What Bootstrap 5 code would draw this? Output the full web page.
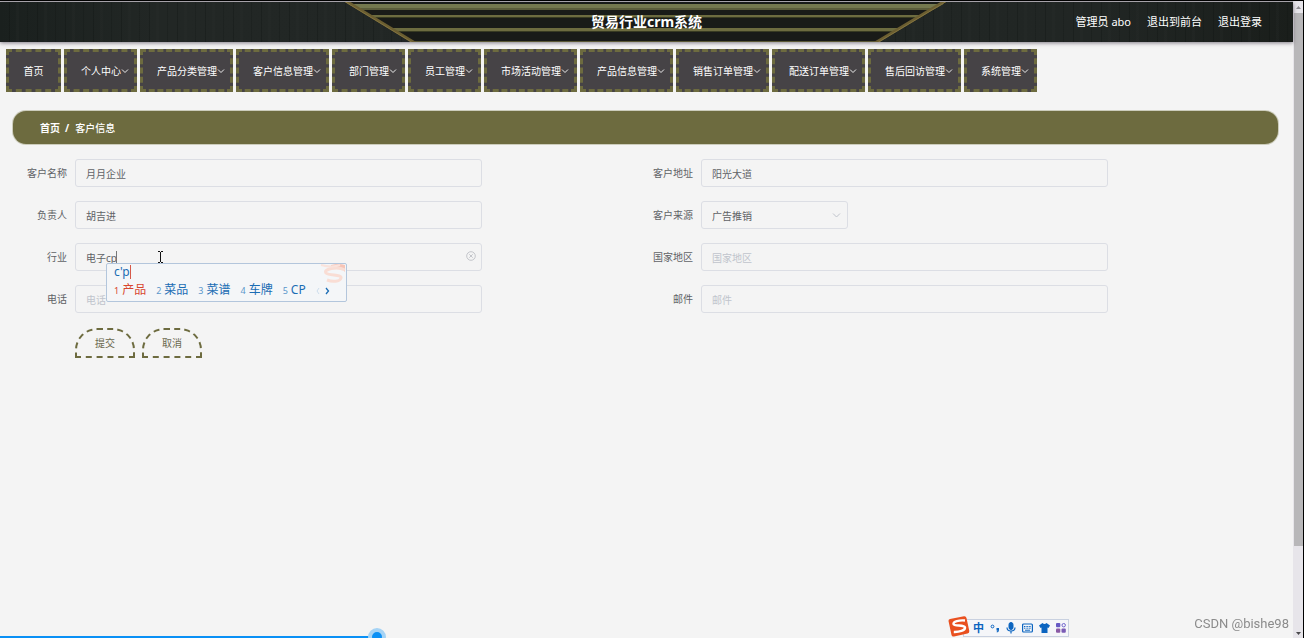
<!DOCTYPE html>
<html lang="zh-CN">
<head>
<meta charset="utf-8">
<meta name="viewport" content="width=device-width, initial-scale=1">
<title>贸易行业crm系统</title>
<link href="https://cdn.jsdelivr.net/npm/bootstrap@5.3.0/dist/css/bootstrap.min.css" rel="stylesheet">
<style>
:root { --olive: #6d6b3f; --line: #dcdee4; }
body { font-family: "Noto Sans", "Noto Sans CJK SC", sans-serif; font-size: 10px; line-height: 16px; color: #606266; background: #f4f4f4; border-top: 1px solid #000; }
.page-main { min-width: 0; border-top: 1px solid #b5b3b8; }
.top-bar { height: 40px; background: repeating-linear-gradient(90deg, #0000 0 9px, #0a0f0d44 9px 10px, #0000 10px 16px, #2c302e33 16px 19px, #0000 19px 27px, #0a0f0d33 27px 28px), linear-gradient(90deg, #1a201e, #222725 12%, #212624 85%, #1a1e1b); box-shadow: 0 1px 4px #645c6acc; display: grid; grid-template-columns: 1fr auto 1fr; }
.top-bar h1 { font-size: 14px; line-height: 20px; font-weight: 700; }
.top-links { font-size: 11px; gap: 16px; padding-right: 31px; }
.main-menu { gap: 3px; padding: 7px 6px 0; }
.menu-btn { background: #464346; border: 3px dashed var(--olive); border-radius: 0; color: #fff; font-size: 10px; line-height: 16px; height: 43px; min-width: 55px; padding: 0 14px; white-space: nowrap; }
.menu-btn.has-sub { padding-right: 5px; }
.menu-btn:hover { background: #353235; color: #fff; border-color: var(--olive); }
.crumbs { margin: 19px 15px 15px 13px; height: 33px; padding: 0 27px; border-radius: 13px; background: var(--olive); box-shadow: 0 0 0 1px #a9a88988; font-weight: 500; color: #fff; }
.crumbs .breadcrumb-item { padding: 0; }
.crumbs .breadcrumb-item + .breadcrumb-item::before { color: #fff; padding: 0 6px 0 5px; font-weight: 700; }
.edit-form { padding: 0 28px 0 13px; display: grid; grid-template-columns: 1fr 1fr; row-gap: 14px; }
.field label { width: 54px; margin-right: 8px; text-align: right; flex: none; }
.field-box { width: 65%; }
.field .form-control, .field .form-select { height: 28px; font-size: 10px; line-height: 16px; color: #606266; background-color: transparent; border: 1px solid var(--line); border-radius: 3px; padding: 1px 10px 0; }
.field .form-select { width: 147px; background-image: none; }
.field .form-control::placeholder { color: #c0c4cc; }
.select-arrow { left: 131px; top: 11px; pointer-events: none; }
.clear-icon { right: 6px; top: 8px; }
.text-caret { left: 41px; top: 8px; width: 1px; height: 12px; background: #777; }
.ibeam { left: 82px; top: 8px; }
.ime { left: 31px; top: 20px; width: 241px; height: 39px; background: #f4f6f8; border: 1px solid #b3c6dc; border-radius: 2px; padding: 1px 7px 0; color: #1b6db4; font-size: 12px; line-height: 16px; z-index: 2; overflow: hidden; }
.ime-typed { width: max-content; border-right: 1px solid #d65a4a; line-height: 14px; }
.ime-list { margin-top: 3px; gap: 10px; white-space: nowrap; }
.ime-list small { font-size: 9px; color: #5b96cb; margin-right: 3px; }
.ime-list .picked, .ime-list .picked small { color: #d9472f; }
.ime-logo { right: 0; top: 0; }
.form-actions { padding: 15px 0 0 75px; gap: 7px; }
.arch-btn { width: 60px; height: 30px; font-size: 10px; line-height: 16px; padding: 0; color: #6b6950; border: 2px dashed var(--olive); border-radius: 22px 22px 0 0; }
.arch-btn:hover { background: #e7e7dc; border-color: var(--olive); color: #6b6950; }
.page-scroll { width: 11px; flex: none; background: #e7e5ea; border-right: 1px solid #000; }
.page-scroll .track-cap { height: 12px; }
.page-scroll .thumb { flex: 86 1 0; background: #b8b7b9; margin: 0 0 0 1px; }
.page-scroll .track-rest { flex: 13 1 0; }
.video-line { left: 0; bottom: 0; width: 29%; height: 2px; background: #0a90f5; }
.video-knob { right: -8px; bottom: -8px; width: 18px; height: 18px; border-radius: 50%; background: #0a90f5; border: 4px solid #a5d3f5; }
.ime-bar { right: 235px; bottom: 1px; height: 20px; width: 121px; }
.ime-bar-body { margin-left: 15px; margin-top: 2px; height: 18px; border: 1px solid #c9d1e0; gap: 6px; padding-left: 9px; color: #0b64c0; background: #f5f6f9; font-size: 11px; font-weight: 700; }
.stamp { right: 15px; bottom: 5px; font-size: 13px; line-height: 18px; color: #8b8b8b; font-family: Roboto, sans-serif; }
</style>
</head>
<body>
<div class="d-flex min-vh-100">
  <div class="page-main flex-grow-1">
    <header class="top-bar position-relative align-items-center">
      <svg class="position-absolute top-0 start-0 w-100 h-100" viewBox="0 0 1293 40" preserveAspectRatio="none" aria-hidden="true">
        <defs><clipPath id="panel"><path d="M345 0H947L877 40H414Z"/></clipPath></defs>
        <g clip-path="url(#panel)">
          <path fill="#191b18" d="M340 0H950V40H340Z"/>
          <path fill="#74784e" d="M340 2H950V6H340Z"/><path fill="#5b5c3a" d="M340 6H950V8H340Z"/>
          <path fill="#6d6c40" d="M340 13H950V15H340ZM340 26H950V29H340Z"/>
          <path fill="#383b22" d="M340 15H950V16H340ZM340 29H950V30H340Z"/>
          <path fill="#5a5935" d="M340 39H950V40H340Z"/>
        </g>
        <path d="M346-1L415 41M945-1L875 41" stroke="#6b5e31" stroke-width="3" fill="none"/>
        <path d="M344-1L413 41M947-1L877 41" stroke="#82733f" stroke-width="1" fill="none"/>
      </svg>
      <span></span>
      <h1 class="position-relative text-white m-0">贸易行业crm系统</h1>
      <nav class="top-links position-relative d-flex justify-content-end">
        <span class="text-white">管理员 abo</span>
        <a class="text-white text-decoration-none" href="#">退出到前台</a>
        <a class="text-white text-decoration-none" href="#">退出登录</a>
      </nav>
    </header>

    <svg class="d-none" aria-hidden="true"><symbol id="chev" viewBox="0 0 8 8"><path d="M1 2.5L4 5.5L7 2.5" fill="none" stroke="currentColor" stroke-width=".9"/></symbol></svg>
    <nav class="main-menu d-flex flex-wrap">
      <button class="btn menu-btn" type="button">首页</button>
      <button class="btn menu-btn has-sub d-flex align-items-center" type="button">个人中心<svg width="8" height="8"><use href="#chev"/></svg></button>
      <button class="btn menu-btn has-sub d-flex align-items-center" type="button">产品分类管理<svg width="8" height="8"><use href="#chev"/></svg></button>
      <button class="btn menu-btn has-sub d-flex align-items-center" type="button">客户信息管理<svg width="8" height="8"><use href="#chev"/></svg></button>
      <button class="btn menu-btn has-sub d-flex align-items-center" type="button">部门管理<svg width="8" height="8"><use href="#chev"/></svg></button>
      <button class="btn menu-btn has-sub d-flex align-items-center" type="button">员工管理<svg width="8" height="8"><use href="#chev"/></svg></button>
      <button class="btn menu-btn has-sub d-flex align-items-center" type="button">市场活动管理<svg width="8" height="8"><use href="#chev"/></svg></button>
      <button class="btn menu-btn has-sub d-flex align-items-center" type="button">产品信息管理<svg width="8" height="8"><use href="#chev"/></svg></button>
      <button class="btn menu-btn has-sub d-flex align-items-center" type="button">销售订单管理<svg width="8" height="8"><use href="#chev"/></svg></button>
      <button class="btn menu-btn has-sub d-flex align-items-center" type="button">配送订单管理<svg width="8" height="8"><use href="#chev"/></svg></button>
      <button class="btn menu-btn has-sub d-flex align-items-center" type="button">售后回访管理<svg width="8" height="8"><use href="#chev"/></svg></button>
      <button class="btn menu-btn has-sub d-flex align-items-center" type="button">系统管理<svg width="8" height="8"><use href="#chev"/></svg></button>
    </nav>

    <nav class="crumbs d-flex align-items-center" aria-label="breadcrumb">
      <ol class="breadcrumb m-0">
        <li class="breadcrumb-item"><a class="text-white text-decoration-none fw-bold" href="#">首页</a></li>
        <li class="breadcrumb-item text-white" aria-current="page">客户信息</li>
      </ol>
    </nav>

    <form>
      <div class="edit-form">
        <div class="field d-flex align-items-center"><label for="f-name">客户名称</label><div class="field-box"><input class="form-control" id="f-name" value="月月企业"></div></div>
        <div class="field d-flex align-items-center"><label for="f-addr">客户地址</label><div class="field-box"><input class="form-control" id="f-addr" value="阳光大道"></div></div>
        <div class="field d-flex align-items-center"><label for="f-owner">负责人</label><div class="field-box"><input class="form-control" id="f-owner" value="胡吉进"></div></div>
        <div class="field d-flex align-items-center"><label for="f-src">客户来源</label><div class="field-box position-relative"><select class="form-select" id="f-src"><option>广告推销</option></select>
          <svg class="select-arrow position-absolute" width="9" height="7" viewBox="0 0 9 7"><path d="M1 1.5L4.500 5L8 1.500" fill="none" stroke="#c0c4cc"/></svg></div></div>
        <div class="field d-flex align-items-center"><label for="f-trade">行业</label>
          <div class="field-box position-relative">
            <input class="form-control" id="f-trade" value="电子cp">
            <span class="text-caret position-absolute"></span>
            <svg class="clear-icon position-absolute" width="10" height="10" viewBox="0 0 10 10" fill="none" stroke="#c3c5ca"><circle cx="5" cy="5" r="4.300"/><path d="M3.300 3.300L6.700 6.700M6.700 3.300L3.300 6.700"/></svg>
            <svg class="ibeam position-absolute" width="7" height="12" viewBox="0 0 7 12" fill="none" stroke="#111"><path d="M1 .5H3M4 .5H6M3.500 1V11M1 11.500H3M4 11.500H6"/></svg>
            <div class="ime position-absolute">
              <svg class="ime-logo position-absolute" width="26" height="22" viewBox="0 0 26 22" fill="none"><path d="M11 1Q19 -1 25 1V8Q22 3 11 4Z" fill="#f6c4b6"/><path d="M25 6C17 2 3 5 6 9C9 12 22 10 21 14C20 18 12 18 7 16" stroke="#f9ddd4" stroke-width="3"/><path d="M1 1Q12 4 20 1" stroke="#fae3dc" stroke-width="2"/></svg>
              <div class="ime-typed">c'p</div>
              <div class="ime-list d-flex">
                <span class="picked"><small>1</small>产品</span><span><small>2</small>菜品</span><span><small>3</small>菜谱</span><span><small>4</small>车牌</span><span><small>5</small>CP</span>
                <svg class="align-self-center" width="14" height="8" viewBox="0 0 14 8" fill="none"><path d="M3 1L1 4L3 7" stroke="#cdddec"/><path d="M10 1L12.500 4L10 7" stroke="#1b6db4" stroke-width="1.300"/></svg>
              </div>
            </div>
          </div>
        </div>
        <div class="field d-flex align-items-center"><label for="f-area">国家地区</label><div class="field-box"><input class="form-control" id="f-area" placeholder="国家地区"></div></div>
        <div class="field d-flex align-items-center"><label for="f-tel">电话</label><div class="field-box"><input class="form-control" id="f-tel" placeholder="电话"></div></div>
        <div class="field d-flex align-items-center"><label for="f-mail">邮件</label><div class="field-box"><input class="form-control" id="f-mail" placeholder="邮件"></div></div>
      </div>
      <div class="form-actions d-flex">
        <button class="btn arch-btn" type="button">提交</button>
        <button class="btn arch-btn" type="button">取消</button>
      </div>
    </form>
  </div>

  <div class="page-scroll d-flex flex-column" aria-hidden="true">
    <svg class="track-cap" width="10" height="12" viewBox="0 0 10 12"><path d="M3 8H8L5.500 5Z" fill="#8f8d92"/></svg>
    <div class="thumb"></div>
    <div class="track-rest"></div>
    <svg class="track-cap" width="10" height="12" viewBox="0 0 10 12"><path d="M3 5H8L5.500 8Z" fill="#4b4a4d"/></svg>
  </div>
</div>

<div class="ime-bar position-fixed d-flex flex-column">
  <div class="ime-bar-body d-flex align-items-center">
    <span>中</span>
    <svg width="10" height="10" viewBox="0 0 10 10"><circle cx="2.500" cy="3.500" r="1.400" fill="none" stroke="#0b64c0"/><path d="M6.500 5H9V7Q9 9 7 9.500L6.500 8.700Q7.500 8.500 7.500 7.500H6.500Z" fill="#0b64c0"/></svg>
    <svg width="10" height="12" viewBox="0 0 10 12" fill="none" stroke="#0b64c0"><rect x="3" y=".5" width="4" height="7" rx="2" fill="#0b64c0"/><path d="M1 5.500Q1 9 5 9Q9 9 9 5.500M5 9V11.500" stroke-width="1.200"/></svg>
    <svg width="11" height="10" viewBox="0 0 11 10" fill="none" stroke="#0b64c0"><rect x=".6" y="1" width="9.800" height="8" rx="1" stroke-width="1.200"/><path d="M2 3.500H9M2 5.200H9" stroke-dasharray="1 .6"/><path d="M3 7.200H8"/></svg>
    <svg width="11" height="10" viewBox="0 0 11 10"><path d="M3.500 0Q5.500 2 7.500 0L11 2.500L9.500 5L8.500 4.500V10H2.500V4.500L1.500 5L0 2.500Z" fill="#0b64c0"/></svg>
    <svg width="10" height="10" viewBox="0 0 10 10"><rect width="4.300" height="4.300" rx="1" fill="#6659c4"/><circle cx="7.700" cy="2.200" r="1.700" fill="none" stroke="#6f63cb"/><rect y="5.500" width="4.300" height="4.300" rx="1" fill="#8a5aa5"/><rect x="5.500" y="5.500" width="4.300" height="4.300" rx="1" fill="#7a5bb5"/></svg>
  </div>
  <svg class="position-absolute start-0 bottom-0" width="22" height="21" viewBox="0 0 22 21"><path d="M2 3L16 .3Q18 0 18.500 2L21.300 15Q21.500 17 19.500 17.500L6 20.500Q4 21 3.500 19L.5 5Q.3 3.400 2 3Z" fill="#e9501f"/><path d="M17 4.500C11 4 5 5.500 5.500 8C6 10.500 16.500 8.500 17 11.500C17.300 14.500 11 16.200 5.800 16" fill="none" stroke="#fff" stroke-width="2.400"/></svg>
</div>
<div class="stamp position-fixed">CSDN @bishe98</div>
<div class="video-line position-fixed"><span class="video-knob position-absolute"></span></div>
<script src="https://cdn.jsdelivr.net/npm/bootstrap@5.3.0/dist/js/bootstrap.bundle.min.js"></script>
</body>
</html>
